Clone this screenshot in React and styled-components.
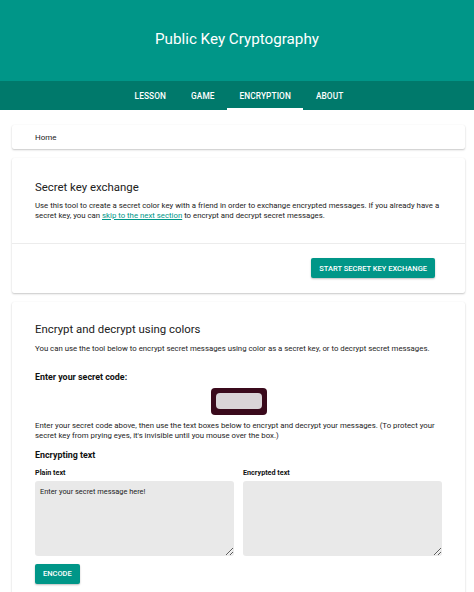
import React from 'react'
import styled, { createGlobalStyle } from 'styled-components'

const GlobalStyle = createGlobalStyle`
    * { box-sizing: border-box; }
    body {
        margin: 0;
        background: #ffffff;
        font-family: Roboto, "Liberation Sans", Arial, sans-serif;
        color: #212121;
    }
`

const Header = styled.header`
    background-color: #009688;
    color: white;
`

const Title = styled.h1`
    margin: 0;
    height: 81px;
    display: flex;
    align-items: center;
    justify-content: center;
    font-size: 15.2px;
    font-weight: 400;
    padding-bottom: 4px;
`

const Nav = styled.nav`
    background-color: #00796b;
    height: 29px;
    display: flex;
    justify-content: center;
    padding-left: 4px;
`

const Tab = styled.a`
    padding: 0 12.5px;
    display: flex;
    align-items: center;
    font-size: 8.3px;
    font-weight: 500;
    letter-spacing: 0.1px;
    color: #ffffff;
    border-bottom: 2px solid ${p => (p.$active ? '#ffffff' : 'transparent')};
    padding-top: 2px;
`

const Main = styled.main`
    padding: 15px 9px 0 12px;
    display: flex;
    flex-direction: column;
    gap: 9px;
`

const Card = styled.section`
    background: white;
    border-radius: 2px;
    box-shadow: 0 1px 2px rgba(0, 0, 0, 0.22), 0 0 1px rgba(0, 0, 0, 0.06);
`

const Breadcrumb = styled(Card)`
    height: 24px;
    display: flex;
    align-items: center;
    padding-left: 23px;
    font-size: 8px;
`

const CardBody = styled.div`
    padding: ${p => p.$pad || '22px 23px 0'};
`

const CardTitle = styled.h2`
    margin: 0 0 ${p => p.$mb || '8px'};
    font-size: 11.4px;
    font-weight: 400;
    color: #212121;
`

const Text = styled.p`
    margin: 0;
    font-size: 7.8px;
    line-height: 10px;
    color: #1c1c1c;
`

const Link = styled.a`
    color: #009688;
    text-decoration: underline;
`

const Divider = styled.hr`
    margin: 22px 0 0;
    border: none;
    border-top: 1px solid #ececec;
`

const Actions = styled.div`
    display: flex;
    justify-content: flex-end;
    padding: 14px 30px 15px 0;
`

const Button = styled.button`
    background-color: #009688;
    color: white;
    border: none;
    border-radius: 2px;
    height: 20px;
    padding: 0 ${p => p.$px || '8px'};
    font-family: inherit;
    font-size: 7.5px;
    font-weight: 500;
    box-shadow: 0 1px 2px rgba(0, 0, 0, 0.25);
    cursor: pointer;
`

const Subheading = styled.h3`
    margin: ${p => p.$m || '0'};
    font-size: 8.9px;
    font-weight: 700;
    color: #111;
`

const KeyWrap = styled.div`
    display: flex;
    justify-content: center;
    margin: 6px 0 6px;
`

const KeyBox = styled.div`
    width: 56px;
    height: 27px;
    background: #3a0a1c;
    border-radius: 4px;
    padding: 5px 5px 6px;
    display: flex;
`

const KeyInput = styled.div`
    flex: 1;
    background: #d9d4d7;
    border-radius: 4px;
`

const Columns = styled.div`
    display: grid;
    grid-template-columns: 1fr 1fr;
    gap: 9px;
    margin-top: 8px;
`

const Field = styled.label`
    display: flex;
    flex-direction: column;
    gap: 4px;
`

const Label = styled.span`
    font-size: 7.2px;
    font-weight: 700;
    color: #111;
`

const Area = styled.textarea`
    display: block;
    height: 75px;
    background: #e9e9e9;
    border: none;
    border-radius: 3px;
    padding: 6px 5px;
    font-family: inherit;
    font-size: 7.4px;
    color: #222;
    resize: vertical;
    &::placeholder { color: #222; }
`

const Footer = styled.div`
    padding: 5px 0 10px;
`

export default function App() {
    return (
        <>
            <GlobalStyle />
            <Header>
                <Title>Public Key Cryptography</Title>
                <Nav>
                    <Tab>LESSON</Tab>
                    <Tab>GAME</Tab>
                    <Tab $active>ENCRYPTION</Tab>
                    <Tab>ABOUT</Tab>
                </Nav>
            </Header>
            <Main>
                <Breadcrumb>Home</Breadcrumb>
                <Card>
                    <CardBody $pad="22px 23px 0">
                        <CardTitle $mb="7px">Secret key exchange</CardTitle>
                        <Text>
                            Use this tool to create a secret color key with a friend in order to exchange encrypted messages. If you already have a secret key, you can <Link>skip to the next section</Link> to encrypt and decrypt secret messages.
                        </Text>
                    </CardBody>
                    <Divider />
                    <Actions>
                        <Button>START SECRET KEY EXCHANGE</Button>
                    </Actions>
                </Card>
                <Card>
                    <CardBody $pad="20px 23px 0">
                        <CardTitle>Encrypt and decrypt using colors</CardTitle>
                        <Text>You can use the tool below to encrypt secret messages using color as a secret key, or to decrypt secret messages.</Text>
                        <Subheading $m="18px 0 0">Enter your secret code:</Subheading>
                        <KeyWrap>
                            <KeyBox><KeyInput /></KeyBox>
                        </KeyWrap>
                        <Text>
                            Enter your secret code above, then use the text boxes below to encrypt and decrypt your messages. (To protect your secret key from prying eyes, it's invisible until you mouse over the box.)
                        </Text>
                        <Subheading $m="9px 0 0">Encrypting text</Subheading>
                        <Columns>
                            <Field>
                                <Label>Plain text</Label>
                                <Area placeholder="Enter your secret message here!" />
                            </Field>
                            <Field>
                                <Label>Encrypted text</Label>
                                <Area />
                            </Field>
                        </Columns>
                        <Footer>
                            <Button $px="8px">ENCODE</Button>
                        </Footer>
                    </CardBody>
                </Card>
            </Main>
        </>
    )
}
